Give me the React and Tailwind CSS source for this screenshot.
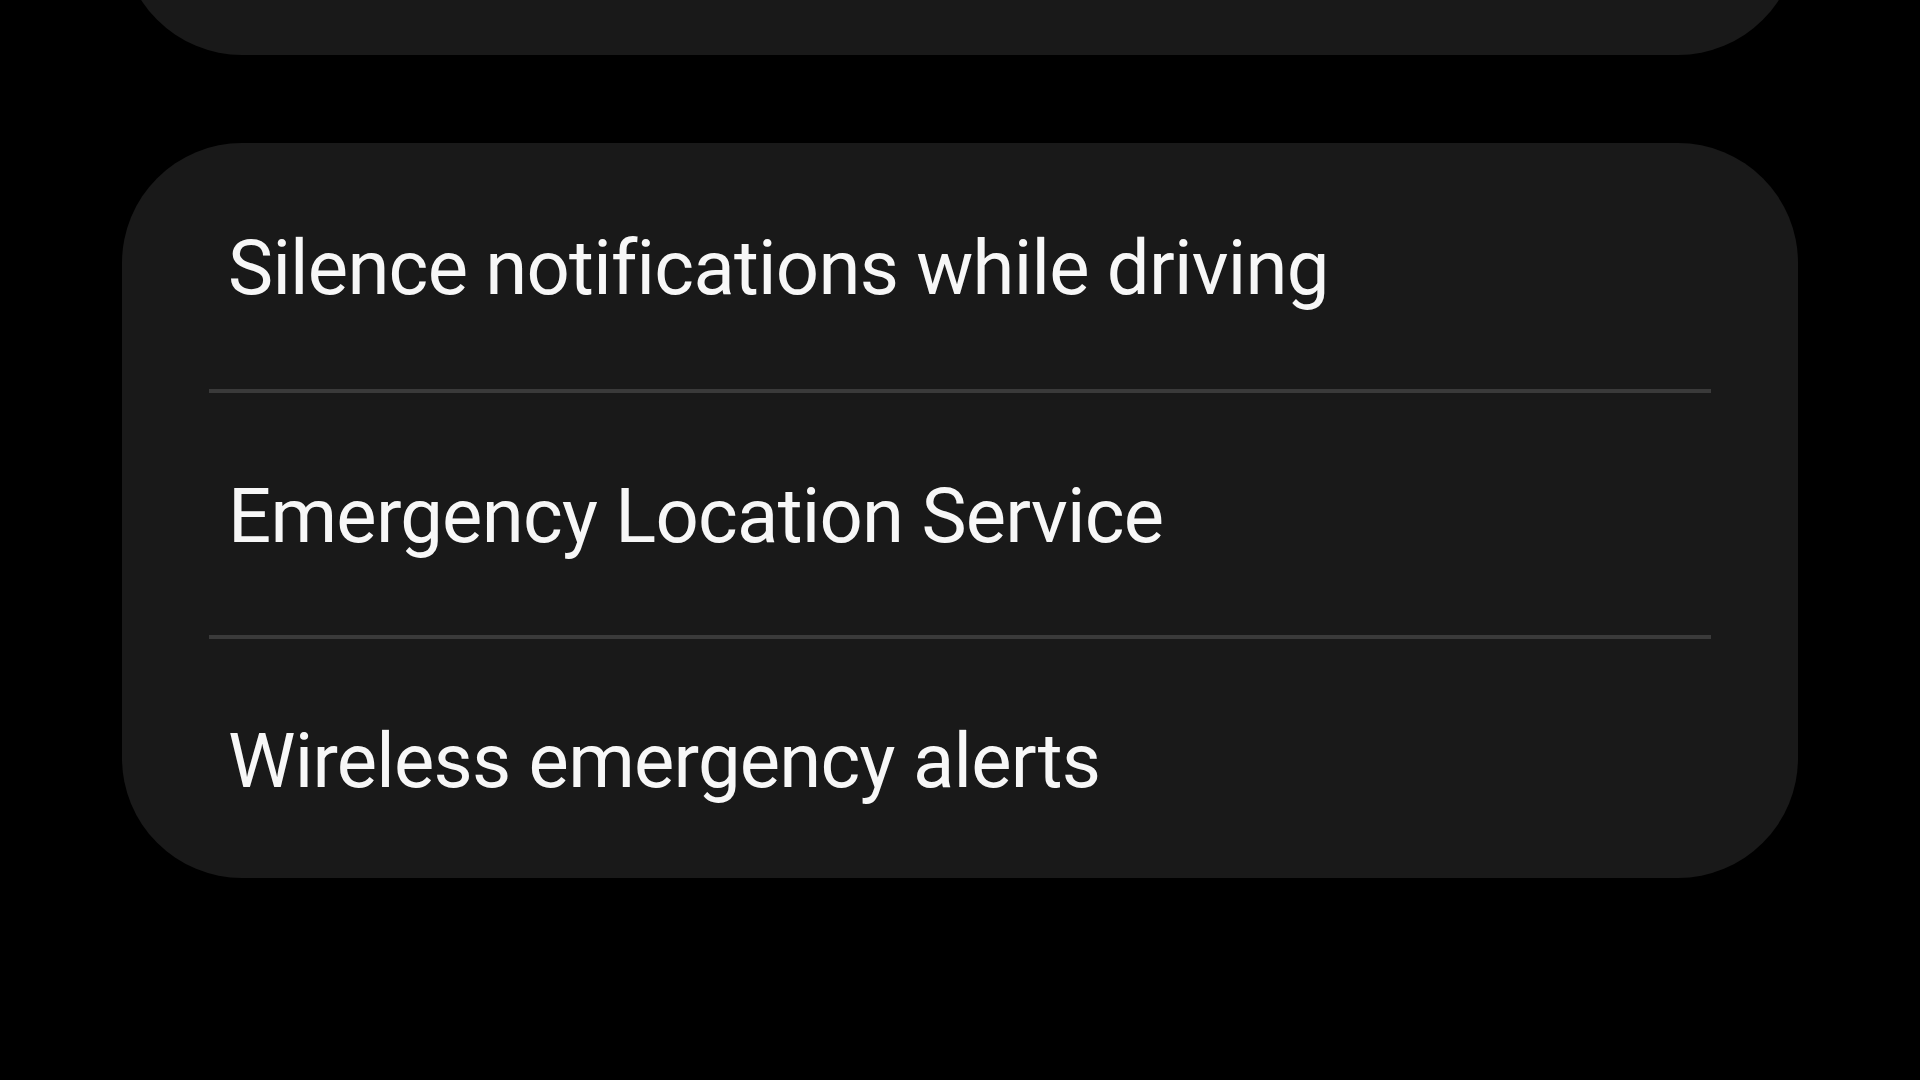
import React from 'react';

const items = [
  { id: 'driving', label: 'Silence notifications while driving', h: 'h-[246px]' },
  { id: 'els', label: 'Emergency Location Service', h: 'h-[242px]' },
  { id: 'wea', label: 'Wireless emergency alerts', h: 'h-[239px]' },
];

function SettingsRow({ label, h }) {
  return (
    <div className={`${h} flex items-center pt-[4px] pl-[106px] pr-[100px]`}>
      <span className="text-[76px] leading-none tracking-[-0.75px] text-[#f7f7f7] font-['Roboto',sans-serif]">
        {label}
      </span>
    </div>
  );
}

export default function App() {
  return (
    <div className="w-[1920px] h-[1080px] overflow-hidden bg-black px-[122px] font-['Roboto',sans-serif]">
      {/* previous group, scrolled mostly out of view */}
      <div className="-mt-[200px] h-[255px] rounded-[120px] bg-[#191919]" />

      <div className="mt-[88px] rounded-[120px] bg-[#191919]">
        {items.map((item, i) => (
          <React.Fragment key={item.id}>
            {i > 0 && <div className="mx-[87px] h-[4px] bg-[#3a3a3a]" />}
            <SettingsRow label={item.label} h={item.h} />
          </React.Fragment>
        ))}
      </div>
    </div>
  );
}
